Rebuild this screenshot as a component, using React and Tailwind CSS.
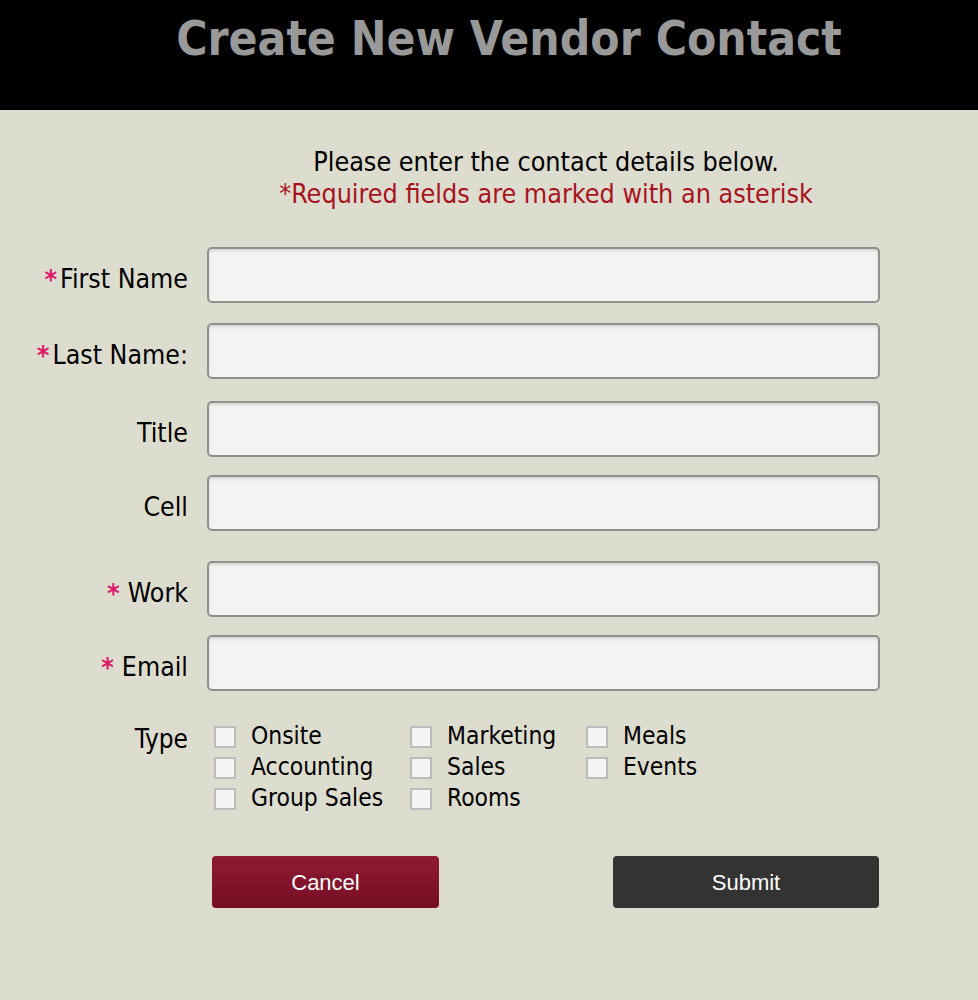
import { useState } from "react";

const fields = [
  { id: "first", label: "First Name", required: true, gap: "mt-0", tight: true },
  { id: "last", label: "Last Name:", required: true, gap: "mt-[20px]", tight: true },
  { id: "title", label: "Title", gap: "mt-[22px]" },
  { id: "cell", label: "Cell", gap: "mt-[18px]" },
  { id: "work", label: "Work", required: true, gap: "mt-[30px]" },
  { id: "email", label: "Email", required: true, gap: "mt-[18px]" },
];

const types = [
  ["Onsite", "Accounting", "Group Sales"],
  ["Marketing", "Sales", "Rooms"],
  ["Meals", "Events"],
];

const font = "font-['DejaVu_Sans_Condensed','DejaVu_Sans',sans-serif]";

const Field = ({ field, value, onChange }) => (
  <div className={`flex items-center ${field.gap}`}>
    <label
      htmlFor={field.id}
      className="w-[188px] shrink-0 pt-[7px] text-right text-[26.5px] leading-[32px] text-black"
    >
      {field.required && (
        <span
          className={`relative top-[1px] text-[27px] font-bold text-[#e0186c] ${field.tight ? "mr-[3px]" : "mr-[8px]"}`}
        >
          *
        </span>
      )}
      {field.label}
    </label>
    <input
      id={field.id}
      value={value}
      onChange={(e) => onChange(field.id, e.target.value)}
      className="ml-[19px] h-[56px] w-[673px] rounded-[5px] border-2 border-[#8f8f8c] bg-[#f3f3f3] px-3 text-[22px] shadow-[inset_0_2px_3px_rgba(0,0,0,0.12)] outline-none"
    />
  </div>
);

const App = () => {
  const [values, setValues] = useState({});
  const [checked, setChecked] = useState({});

  const setValue = (id, v) => setValues((prev) => ({ ...prev, [id]: v }));
  const toggle = (name) => setChecked((prev) => ({ ...prev, [name]: !prev[name] }));

  return (
    <div className={`min-h-[1000px] w-[978px] bg-[#dcddcf] ${font}`}>
      <div className="h-[110px] bg-black pl-[40px] pt-[11px] text-center">
        <h1 className="text-[47.5px] font-bold leading-[56px] text-[#999999]">
          Create New Vendor Contact
        </h1>
      </div>

      <div className="pl-[114px] pt-[36px] text-center text-[26.7px] leading-[32px]">
        <p className="text-black">Please enter the contact details below.</p>
        <p className="text-[#a8121d]">*Required fields are marked with an asterisk</p>
      </div>

      <form className="mt-[37px]" onSubmit={(e) => e.preventDefault()}>
        {fields.map((f) => (
          <Field key={f.id} field={f} value={values[f.id] || ""} onChange={setValue} />
        ))}

        <div className="mt-[30px] flex items-start">
          <div className="w-[188px] shrink-0 pt-[3px] text-right text-[26px] leading-[31px]">Type</div>
          <div className="ml-[26px] flex">
            {types.map((col, i) => (
              <div key={i} className={i === 0 ? "w-[196px]" : i === 1 ? "w-[176px]" : ""}>
                {col.map((name) => (
                  <label key={name} className="flex h-[31px] items-center text-[24.4px]">
                    <span
                      onClick={() => toggle(name)}
                      className={`h-[22px] w-[22px] shrink-0 border-2 border-[#bcbcbc] bg-[#f4f4f4] ${checked[name] ? "bg-[#555]" : ""}`}
                    />
                    <span className="ml-[15px] text-black">{name}</span>
                  </label>
                ))}
              </div>
            ))}
          </div>
        </div>

        <div className="mt-[42px] flex font-['Liberation_Sans',sans-serif] text-[22px] text-white">
          <button
            type="button"
            className="ml-[212px] h-[52px] w-[227px] rounded-[4px] bg-gradient-to-b from-[#8f1a33] to-[#760e24]"
          >
            Cancel
          </button>
          <button
            type="submit"
            className="ml-[174px] h-[52px] w-[266px] rounded-[4px] bg-[#333333]"
          >
            Submit
          </button>
        </div>
      </form>
    </div>
  );
};

export default App;
